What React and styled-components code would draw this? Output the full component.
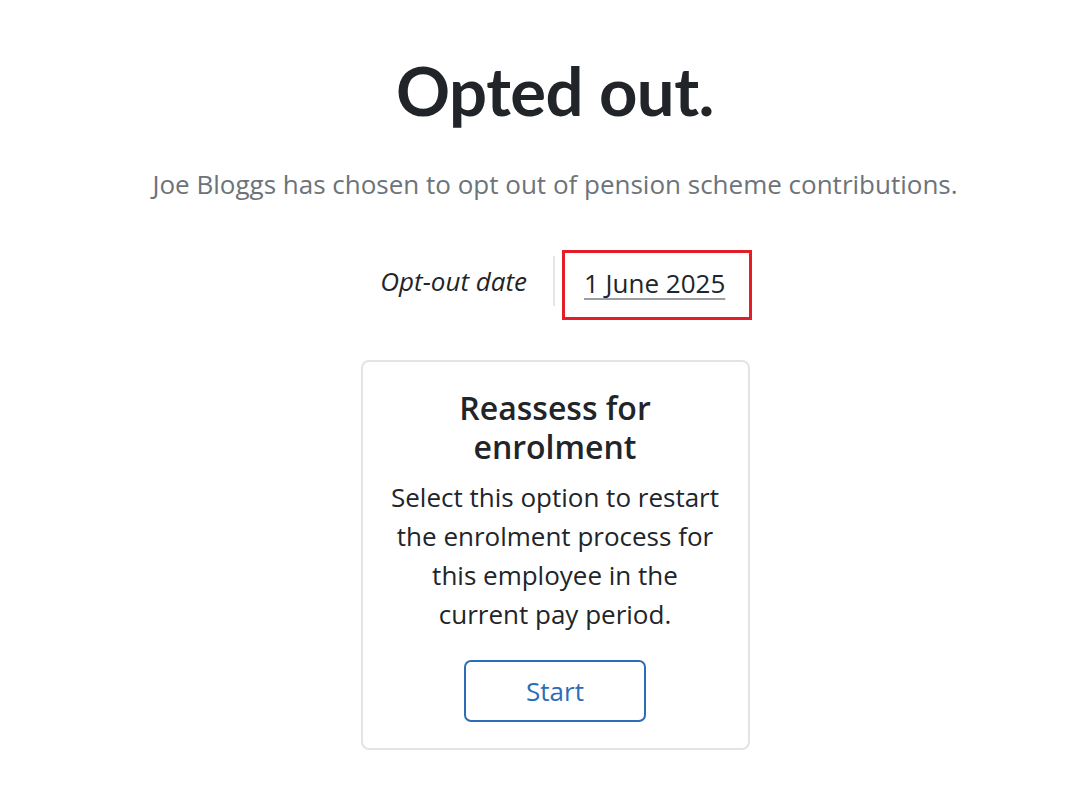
import styled, { createGlobalStyle } from 'styled-components'

const GlobalStyle = createGlobalStyle`
  body {
    margin: 0;
    background: #ffffff;
    font-family: "Open Sans", "Liberation Sans", sans-serif;
    color: #212529;
  }
`

const Page = styled.main`
  display: flex;
  flex-direction: column;
  align-items: center;
  padding: 50px 0 0 40px;
`

const Title = styled.h1`
  margin: 0;
  font-family: Lato, "Open Sans", sans-serif;
  font-weight: 700;
  font-size: 67px;
  line-height: 80px;
  letter-spacing: -0.5px;
  color: #212529;
`

const Lead = styled.p`
  margin: 36px 0 0;
  font-size: 26px;
  line-height: 36px;
  color: #6c737a;
`

const DateRow = styled.div`
  display: grid;
  grid-template-columns: 1fr 1fr;
  align-items: center;
  width: 100%;
  margin-top: 48px;
`

const DateLabel = styled.span`
  justify-self: end;
  margin-bottom: 8px;
  font-style: italic;
  font-size: 26px;
  line-height: 50px;
  color: #212529;
  padding-right: 26px;
  border-right: 2px solid #e3e5e7;
`

const DateBox = styled.div`
  justify-self: start;
  margin-left: 7px;
  padding: 12px 24px 16px 19px;
  border: 3px solid #e41e26;
  font-size: 26px;
  line-height: 36px;
`

const DateValue = styled.span`
  text-decoration: underline;
  text-decoration-color: #9b9ea2;
  text-underline-offset: 5px;
  text-decoration-thickness: 2px;
`

const Card = styled.section`
  box-sizing: border-box;
  width: 389px;
  margin-top: 40px;
  padding: 26px 24px 26px;
  border: 2px solid #e2e4e6;
  border-radius: 8px;
  display: flex;
  flex-direction: column;
  align-items: center;
  text-align: center;
`

const CardTitle = styled.h2`
  margin: 0;
  font-size: 32px;
  font-weight: 600;
  line-height: 39px;
  color: #212529;
`

const CardText = styled.p`
  margin: 12px 0 0;
  font-size: 26px;
  line-height: 39px;
  color: #212529;
`

const Button = styled.button`
  box-sizing: border-box;
  width: 182px;
  height: 62px;
  margin-top: 26px;
  border: 2px solid #2d6cb6;
  border-radius: 7px;
  background: #ffffff;
  color: #2d6cb6;
  font-family: "Open Sans", sans-serif;
  font-size: 26px;
  cursor: pointer;
`

export default function App () {
  return (
    <>
      <GlobalStyle />
      <Page>
        <Title>Opted out.</Title>
        <Lead>Joe Bloggs has chosen to opt out of pension scheme contributions.</Lead>
        <DateRow>
          <DateLabel>Opt-out date</DateLabel>
          <DateBox>
            <DateValue>1 June 2025</DateValue>
          </DateBox>
        </DateRow>
        <Card>
          <CardTitle>Reassess for enrolment</CardTitle>
          <CardText>
            Select this option to restart the enrolment process for this employee in the current pay period.
          </CardText>
          <Button>Start</Button>
        </Card>
      </Page>
    </>
  )
}
